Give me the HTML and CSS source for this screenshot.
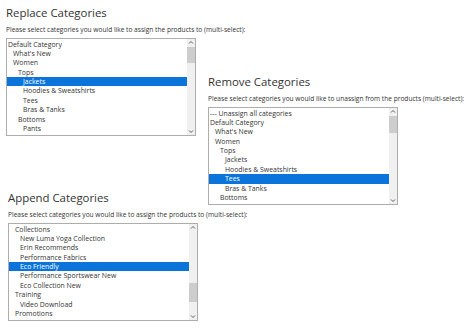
FILE: index.html
```html
<!DOCTYPE html>
<html>

<head>
    <title>Mass Update Categories</title>
    <link rel="stylesheet" href="styles.css">
</head>

<body>
    <div class="page">
        <div class="col">
            <div class="block">
                <h2 class="title">Replace Categories</h2>
                <p class="hint">Please select categories you would like to assign the products to (multi-select):</p>
                <div class="picker">
                    <div class="options">
                        <div class="opt l0">Default Category</div>
                        <div class="opt l1">What's New</div>
                        <div class="opt l1">Women</div>
                        <div class="opt l2">Tops</div>
                        <div class="opt l3 selected">Jackets</div>
                        <div class="opt l3">Hoodies &amp; Sweatshirts</div>
                        <div class="opt l3">Tees</div>
                        <div class="opt l3">Bras &amp; Tanks</div>
                        <div class="opt l2">Bottoms</div>
                        <div class="opt l3">Pants</div>
                    </div>
                    <div class="scrollbar">
                        <svg class="arrow" viewBox="0 0 8 6"><path d="M2 4 L4 2 L6 4" /></svg>
                        <div class="track">
                            <div class="thumb thumb-top"></div>
                        </div>
                        <svg class="arrow" viewBox="0 0 8 6"><path d="M2 2 L4 4 L6 2" /></svg>
                    </div>
                </div>
            </div>

            <div class="block append">
                <h2 class="title">Append Categories</h2>
                <p class="hint">Please select categories you would like to assign the products to (multi-select):</p>
                <div class="picker">
                    <div class="options">
                        <div class="opt l1">Collections</div>
                        <div class="opt l2">New Luma Yoga Collection</div>
                        <div class="opt l2">Erin Recommends</div>
                        <div class="opt l2">Performance Fabrics</div>
                        <div class="opt l2 selected">Eco Friendly</div>
                        <div class="opt l2">Performance Sportswear New</div>
                        <div class="opt l2">Eco Collection New</div>
                        <div class="opt l1">Training</div>
                        <div class="opt l2">Video Download</div>
                        <div class="opt l1">Promotions</div>
                    </div>
                    <div class="scrollbar">
                        <svg class="arrow" viewBox="0 0 8 6"><path d="M2 4 L4 2 L6 4" /></svg>
                        <div class="track">
                            <div class="thumb thumb-low"></div>
                        </div>
                        <svg class="arrow" viewBox="0 0 8 6"><path d="M2 2 L4 4 L6 2" /></svg>
                    </div>
                </div>
            </div>
        </div>

        <div class="col right">
            <div class="block">
                <h2 class="title">Remove Categories</h2>
                <p class="hint">Please select categories you would like to unassign from the products (multi-select):</p>
                <div class="picker">
                    <div class="options">
                        <div class="opt l0">--- Unassign all categories</div>
                        <div class="opt l0">Default Category</div>
                        <div class="opt l1">What's New</div>
                        <div class="opt l1">Women</div>
                        <div class="opt l2">Tops</div>
                        <div class="opt l3">Jackets</div>
                        <div class="opt l3">Hoodies &amp; Sweatshirts</div>
                        <div class="opt l3 selected">Tees</div>
                        <div class="opt l3">Bras &amp; Tanks</div>
                        <div class="opt l2">Bottoms</div>
                    </div>
                    <div class="scrollbar">
                        <svg class="arrow" viewBox="0 0 8 6"><path d="M2 4 L4 2 L6 4" /></svg>
                        <div class="track">
                            <div class="thumb thumb-mid"></div>
                        </div>
                        <svg class="arrow" viewBox="0 0 8 6"><path d="M2 2 L4 4 L6 2" /></svg>
                    </div>
                </div>
            </div>
        </div>
    </div>
</body>

</html>
```

FILE: styles.css
```css
body {
    margin: 0;
    background-color: #ffffff;
    font-family: "Open Sans", "Noto Sans", sans-serif;
    color: #333333;
}

.page {
    display: grid;
    grid-template-columns: 190px 190px;
    column-gap: 12px;
    padding: 4px 6px;
}

.right {
    padding-top: 69px;
}

.append {
    margin-top: 53px;
    margin-left: 2px;
}

.title {
    margin: 0;
    font-size: 11.4px;
    line-height: 18px;
    font-weight: normal;
    color: #333333;
}

.hint {
    margin: 3px 0 3px 0;
    font-size: 6.6px;
    line-height: 10px;
    white-space: nowrap;
    color: #333333;
}

.picker {
    display: flex;
    width: 188px;
    height: 96px;
    border: 1px solid #adadad;
    background-color: #ffffff;
    overflow: hidden;
}

.options {
    flex: 1;
    padding-top: 0.5px;
}

.opt {
    height: 9.4px;
    line-height: 9.4px;
    font-size: 6.9px;
    white-space: nowrap;
    color: #333333;
}

.l0 { padding-left: 1px; }
.l1 { padding-left: 6px; }
.l2 { padding-left: 11px; }
.l3 { padding-left: 16px; }

.opt.selected {
    background-color: #0a74da;
    color: #ffffff;
}

.scrollbar {
    display: flex;
    flex-direction: column;
    width: 8px;
    background-color: #f0f0f0;
}

.arrow {
    width: 8px;
    height: 7px;
    flex: none;
}

.arrow path {
    fill: none;
    stroke: #606060;
    stroke-width: 1;
}

.track {
    flex: 1;
}

.thumb {
    width: 8px;
    background-color: #cdcdcd;
}

.thumb-top {
    margin-top: 1px;
    height: 16px;
}

.thumb-mid {
    margin-top: 1px;
    height: 17px;
}

.thumb-low {
    margin-top: 52px;
    height: 19px;
}
```
